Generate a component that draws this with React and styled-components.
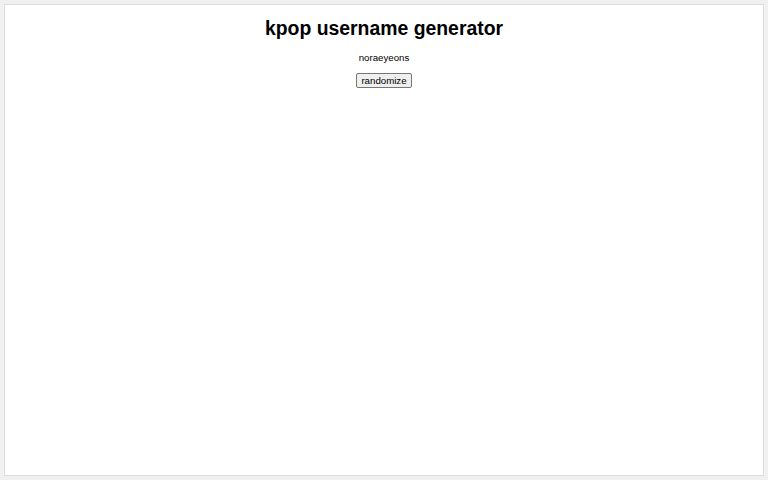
import React from "react";
import styled, { createGlobalStyle } from "styled-components";

const Global = createGlobalStyle`
  html, body { margin: 0; padding: 0; }
  body {
    background: #f0f0f0;
    font-family: "Liberation Sans", Arial, sans-serif;
  }
`;

const Page = styled.div`
  box-sizing: border-box;
  height: 480px;
  padding: 4px;
  display: flex;
`;

const Card = styled.main`
  flex: 1;
  background: #fff;
  border: 1px solid #dcdcdc;
  display: flex;
  flex-direction: column;
  align-items: center;
`;

const Title = styled.h1`
  margin: 11px 0 0;
  font-size: 19.4px;
  font-weight: bold;
  color: #000;
  line-height: 24px;
`;

const Name = styled.p`
  margin: 12px 0 0;
  font-size: 9.7px;
  line-height: 12px;
  color: #000;
`;

const Button = styled.button`
  margin-top: 9px;
  font-family: "Liberation Sans", Arial, sans-serif;
  font-size: 9.7px;
  line-height: 12px;
  padding: 0 4px;
  height: 15px;
  background: #efefef;
  border: 1px solid #767676;
  border-radius: 2px;
  color: #000;
`;

export default function App() {
  return (
    <>
      <Global />
      <Page>
        <Card>
          <Title>kpop username generator</Title>
          <Name>noraeyeons</Name>
          <Button>randomize</Button>
        </Card>
      </Page>
    </>
  );
}
